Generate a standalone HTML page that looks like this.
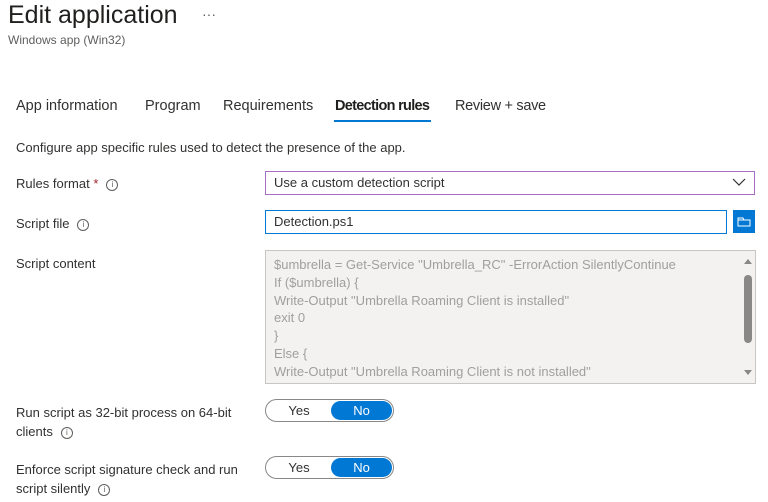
<!DOCTYPE html>
<html><head><style>
body{margin:0;width:768px;height:502px;background:#fff;font-family:"Liberation Sans",sans-serif;color:#323130;position:relative;overflow:hidden}
.a{position:absolute;white-space:nowrap}
.lbl{font-size:13px;color:#323130}
.tab{position:absolute;white-space:nowrap;top:98px;font-size:14.5px}
.info{display:inline-block;width:10px;height:10px;border:1px solid #605e5c;border-radius:50%;font-size:8px;line-height:10px;text-align:center;vertical-align:middle;margin-left:8px;color:#605e5c}
.tog{position:absolute;left:265px;width:127px;height:21px;border:1px solid #8a8886;border-radius:12px;font-size:13px}
.tog .y{position:absolute;left:0;width:66px;text-align:center;line-height:21px}
.tog .n{position:absolute;right:1px;top:1px;width:61px;height:19px;background:#0078d4;color:#fff;border-radius:10px;text-align:center;line-height:19px}
</style></head><body>
<div class="a" style="left:8px;top:1px;font-size:25px;color:#201f1e">Edit application</div>
<div class="a" style="left:202px;top:6px;font-size:14px;color:#605e5c">···</div>
<div class="a" style="left:8px;top:33px;font-size:12px;color:#605e5c">Windows app (Win32)</div>
<div class="tab" style="left:16px">App information</div>
<div class="tab" style="left:145px">Program</div>
<div class="tab" style="left:223px">Requirements</div>
<div class="tab" style="left:335px;color:#201f1e;font-weight:bold;letter-spacing:-0.7px">Detection rules</div>
<div class="a" style="left:334px;top:120px;width:97px;height:2px;background:#0078d4"></div>
<div class="tab" style="left:455px;letter-spacing:-0.3px">Review + save</div>
<div class="a lbl" style="left:16px;top:140px">Configure app specific rules used to detect the presence of the app.</div>
<div class="a lbl" style="left:16px;top:176px">Rules format <span style="color:#a4262c">*</span><span class="info">i</span></div>
<div class="a" style="left:265px;top:171px;width:488px;height:22px;border:1px solid #a66ec9;font-size:13px;line-height:22px;text-indent:8px">Use a custom detection script
<svg style="position:absolute;right:8px;top:6px" width="14" height="9"><path d="M1 1l6 6 6-6" fill="none" stroke="#323130" stroke-width="1.2"/></svg></div>
<div class="a lbl" style="left:16px;top:216px">Script file<span class="info">i</span></div>
<div class="a" style="left:265px;top:210px;width:460px;height:22px;border:1px solid #0078d4;font-size:13px;line-height:22px;text-indent:8px">Detection.ps1</div>
<div class="a" style="left:733px;top:210px;width:22px;height:23px;background:#0078d4"><svg width="22" height="23"><path d="M5 8h5l1 2h6v6H5z M5 10h12" fill="none" stroke="#fff" stroke-width="1"/></svg></div>
<div class="a lbl" style="left:16px;top:256px">Script content</div>
<div class="a" style="left:265px;top:250px;width:489px;height:132px;border:1px solid #c8c6c4;background:#f3f2f1;font-size:13px;color:#a19f9d;line-height:17.8px;overflow:hidden">
<div style="padding:5px 8px">$umbrella = Get-Service "Umbrella_RC" -ErrorAction SilentlyContinue<br>If ($umbrella) {<br>Write-Output "Umbrella Roaming Client is installed"<br>exit 0<br>}<br>Else {<br>Write-Output "Umbrella Roaming Client is not installed"</div>
<div style="position:absolute;right:3px;top:24px;width:8px;height:68px;background:#8a8886;border-radius:4px"></div>
<div style="position:absolute;right:3px;top:8px;width:0;height:0;border:4px solid transparent;border-bottom:5px solid #8a8886;border-top:0"></div>
<div style="position:absolute;right:3px;bottom:8px;width:0;height:0;border:4px solid transparent;border-top:5px solid #8a8886;border-bottom:0"></div>
</div>
<div class="a lbl" style="left:16px;top:403px;line-height:19px">Run script as 32-bit process on 64-bit<br>clients<span class="info">i</span></div>
<div class="tog" style="top:399px"><span class="y">Yes</span><span class="n">No</span></div>
<div class="a lbl" style="left:16px;top:460px;line-height:19px">Enforce script signature check and run<br>script silently<span class="info">i</span></div>
<div class="tog" style="top:456px"><span class="y">Yes</span><span class="n">No</span></div>
</body></html>
